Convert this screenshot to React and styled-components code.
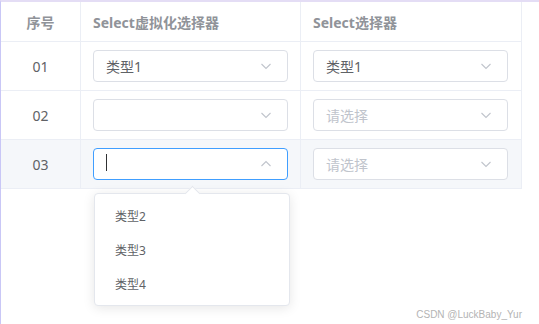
import React from 'react';
import styled, { createGlobalStyle } from 'styled-components';

const GlobalStyle = createGlobalStyle`
  html, body {
    margin: 0;
    padding: 0;
    background: #fff;
  }
  body {
    font-family: "Noto Sans", "Noto Sans CJK SC", sans-serif;
    width: 539px;
    height: 324px;
    overflow: hidden;
    box-sizing: border-box;
    border-top: 2px solid #e4ddf5;
    border-left: 1px solid #c9c7f6;
  }
`;

const Page = styled.div`
  position: relative;
  height: 322px;
`;

const Table = styled.div`
  width: 520px;
  border-right: 1px solid #ebeef5;
`;

const Row = styled.div`
  display: grid;
  grid-template-columns: 79px 220px 220px;
  height: ${({ $head }) => ($head ? 39 : 48)}px;
  border-bottom: 1px solid #ebeef5;
  background: ${({ $hover }) => ($hover ? '#f5f7fa' : '#fff')};
`;

const Cell = styled.div`
  display: flex;
  align-items: center;
  justify-content: ${({ $center }) => ($center ? 'center' : 'flex-start')};
  padding: 0 12px;
  border-left: ${({ $first }) => ($first ? 'none' : '1px solid #ebeef5')};
  position: relative;
  font-size: 14px;
  color: #606266;
`;

const HeadCell = styled(Cell)`
  font-weight: bold;
  color: #909399;
  padding-top: 1px;
`;

const SelectBox = styled.div`
  box-sizing: border-box;
  width: 195px;
  height: 32px;
  border: 1px solid ${({ $focus }) => ($focus ? '#409eff' : '#dcdfe6')};
  border-radius: 4px;
  background: #fff;
  display: flex;
  align-items: center;
  padding: 0 12px;
  font-size: 14px;
  color: ${({ $placeholder }) => ($placeholder ? '#c0c4cc' : '#606266')};
`;

const Value = styled.span`
  flex: 1;
  white-space: nowrap;
`;

const Caret = styled.span`
  display: inline-block;
  width: 1px;
  height: 17px;
  background: #303133;
`;

const Arrow = styled.svg`
  width: 14px;
  height: 14px;
  margin-right: 2px;
  transform: ${({ $up }) => ($up ? 'rotate(180deg)' : 'none')};
`;

const Dropdown = styled.div`
  position: absolute;
  left: 93px;
  top: 191px;
  width: 196px;
  height: 113px;
  box-sizing: border-box;
  background: #fff;
  border: 1px solid #e4e7ed;
  border-radius: 4px;
  box-shadow: 0 2px 12px rgba(0, 0, 0, 0.1);
  padding: 6px 0;
`;

const Pointer = styled.div`
  position: absolute;
  top: -6px;
  left: 92px;
  width: 10px;
  height: 10px;
  background: #fff;
  border-left: 1px solid #e4e7ed;
  border-top: 1px solid #e4e7ed;
  transform: rotate(45deg);
`;

const Option = styled.div`
  height: 34px;
  line-height: 34px;
  padding: 0 20px;
  font-size: 12px;
  color: #606266;
`;

const Mark = styled.div`
  position: absolute;
  right: 17px;
  bottom: 4px;
  font-family: "Liberation Sans", Arial, sans-serif;
  font-size: 10px;
  color: #b4b4b4;
`;

function Select({ value, placeholder, focus }) {
  return (
    <SelectBox $focus={focus} $placeholder={!value && placeholder}>
      <Value>{focus ? <Caret /> : value || placeholder}</Value>
      <Arrow viewBox="0 0 14 14" $up={focus}>
        <path d="M2.5 5 L7 9.5 L11.5 5" fill="none" stroke="#c0c4cc" strokeWidth="1.1" />
      </Arrow>
    </SelectBox>
  );
}

const rows = [
  { no: '01', a: '类型1', b: '类型1' },
  { no: '02', a: '', b: '' },
  { no: '03', a: '', b: '', focus: true },
];

export default function App() {
  return (
    <Page>
      <GlobalStyle />
      <Table>
        <Row $head>
          <HeadCell $first $center>序号</HeadCell>
          <HeadCell>Select虚拟化选择器</HeadCell>
          <HeadCell>Select选择器</HeadCell>
        </Row>
        {rows.map((r) => (
          <Row key={r.no} $hover={r.focus}>
            <Cell $first $center>{r.no}</Cell>
            <Cell>
              <Select value={r.a} focus={r.focus} />
            </Cell>
            <Cell>
              <Select value={r.b} placeholder="请选择" />
            </Cell>
          </Row>
        ))}
      </Table>
      <Dropdown>
        <Pointer />
        {['类型2', '类型3', '类型4'].map((t) => (
          <Option key={t}>{t}</Option>
        ))}
      </Dropdown>
      <Mark>CSDN @LuckBaby_Yur</Mark>
    </Page>
  );
}
